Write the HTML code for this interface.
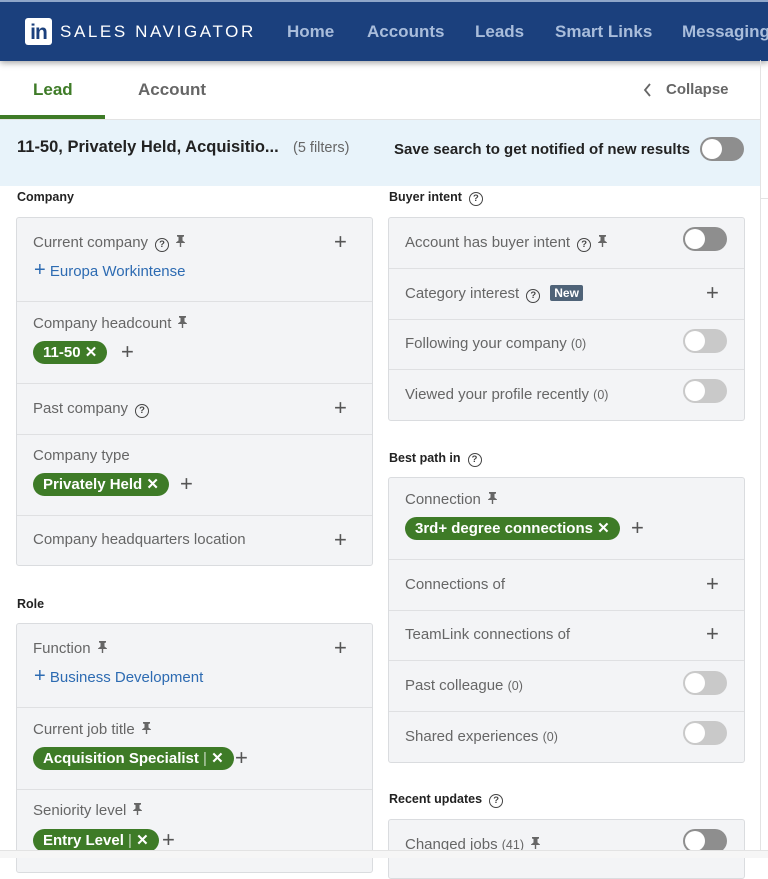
<!DOCTYPE html>
<html><head><meta charset="utf-8"><style>
*{margin:0;padding:0;box-sizing:border-box}
body{width:768px;height:858px;overflow:hidden;background:#fff;font-family:"Liberation Sans",Arial,sans-serif;position:relative}
.a{position:absolute;white-space:nowrap}
.hdr{left:0;top:0;width:768px;height:61px;background:#1b407d;border-top:2px solid #8fa6c9;box-shadow:0 2px 6px rgba(0,0,0,.35)}
.nav{top:22px;font-size:17px;font-weight:bold;color:#a9bddb}
.lbl{font-size:15px;color:#666;line-height:18px}
.sec{font-size:12.5px;font-weight:bold;color:#222;line-height:16px}
.card{background:#f3f4f6;border:1px solid #dadcdf;border-radius:3px}
.div{height:1px;background:#dfe0e2}
.plus{font-size:22px;color:#555;line-height:20px;font-weight:300}
.chip{background:#3e7b27;color:#fff;font-weight:bold;font-size:15px;height:23px;line-height:23px;border-radius:12px;padding:0 10px}
.tog{width:44px;height:24px;border-radius:12px;background:#c9c9c9}
.tog:after{content:"";position:absolute;left:2px;top:2px;width:20px;height:20px;border-radius:50%;background:#fff}
.blue{color:#2d6bb2;font-size:15px}
.q{display:inline-block;width:14px;height:14px;border:1.5px solid #444;border-radius:50%;font-size:9.5px;line-height:11px;text-align:center;font-weight:bold;color:#444;vertical-align:0;margin-left:7px}
.pin{display:inline-block;width:9px;height:12px;margin-left:7px;vertical-align:0}
.cnt{font-size:12.5px;color:#666}
</style></head><body>
<div class="a hdr"></div>
<div class="a" style="left:25px;top:18px;width:27px;height:27px;background:#fff;border-radius:3px;color:#1b407d;font-weight:bold;font-size:21px;line-height:29px;text-align:center;letter-spacing:-1px">in</div>
<div class="a" style="left:60px;top:22px;color:#fff;font-size:17px;letter-spacing:2.6px">SALES NAVIGATOR</div>
<div class="a nav" style="left:287px">Home</div>
<div class="a nav" style="left:367px">Accounts</div>
<div class="a nav" style="left:475px">Leads</div>
<div class="a nav" style="left:555px">Smart Links</div>
<div class="a nav" style="left:682px">Messaging</div>

<div class="a" style="left:33px;top:80px;font-size:17px;font-weight:bold;color:#3e7b27">Lead</div>
<div class="a" style="left:0;top:115px;width:105px;height:4px;background:#3e7b27"></div>
<div class="a" style="left:138px;top:80px;font-size:17px;font-weight:bold;color:#666">Account</div>
<svg class="a" style="left:643px;top:83px" width="8" height="14"><path d="M7 1L2 7l5 6" stroke="#666" stroke-width="1.8" fill="none"/></svg>
<div class="a" style="left:666px;top:81px;font-size:15px;font-weight:bold;color:#666">Collapse</div>
<div class="a" style="left:0;top:119px;width:760px;height:1px;background:#e3e3e3"></div>

<div class="a" style="left:0;top:120px;width:760px;height:66px;background:#e8f3fa"></div>
<div class="a" style="left:17px;top:138px;font-size:16.5px;font-weight:bold;color:#222">11-50, Privately Held, Acquisitio...</div>
<div class="a" style="left:293px;top:140px;font-size:14.5px;color:#666">(5 filters)</div>
<div class="a" style="left:394px;top:141px;font-size:15px;font-weight:bold;color:#222">Save search to get notified of new results</div>
<div class="a tog" style="left:700px;top:137px;background:#8e8e8e"></div>
<div class="a" style="left:760px;top:60px;width:1px;height:798px;background:#e3e3e3"></div>
<div class="a" style="left:761px;top:198px;width:7px;height:1px;background:#e3e3e3"></div>

<div class="a sec" style="left:17px;top:189px">Company</div>
<div class="a card" style="left:16px;top:217px;width:357px;height:349px"></div>
<div class="a div" style="left:17px;top:301px;width:355px"></div>
<div class="a div" style="left:17px;top:383px;width:355px"></div>
<div class="a div" style="left:17px;top:434px;width:355px"></div>
<div class="a div" style="left:17px;top:515px;width:355px"></div>

<svg width="0" height="0" style="position:absolute"><defs><symbol id="p" viewBox="0 0 9 12"><path d="M1 0h7v1.5L6.5 2v3.5L9 7.5V8H5.2v4H3.8V8H0v-.5L2.5 5.5V2L1 1.5z" fill="#666"/></symbol></defs></svg>

<div class="a lbl" style="left:33px;top:234px">Current company<span class="q">?</span><svg class="pin"><use href="#p"/></svg></div>
<div class="a plus" style="left:334px;top:232px">+</div>
<div class="a blue" style="left:34px;top:263px"><b style="font-size:20px;font-weight:normal;line-height:14px">+</b> Europa Workintense</div>

<div class="a lbl" style="left:33px;top:315px">Company headcount<svg class="pin"><use href="#p"/></svg></div>
<div class="a chip" style="left:33px;top:341px">11-50 ✕</div>
<div class="a plus" style="left:121px;top:342px">+</div>

<div class="a lbl" style="left:33px;top:400px">Past company<span class="q">?</span></div>
<div class="a plus" style="left:334px;top:398px">+</div>

<div class="a lbl" style="left:33px;top:447px">Company type</div>
<div class="a chip" style="left:33px;top:473px">Privately Held ✕</div>
<div class="a plus" style="left:180px;top:474px">+</div>

<div class="a lbl" style="left:33px;top:531px">Company headquarters location</div>
<div class="a plus" style="left:334px;top:530px">+</div>

<div class="a sec" style="left:17px;top:596px">Role</div>
<div class="a card" style="left:16px;top:623px;width:357px;height:250px"></div>
<div class="a div" style="left:17px;top:707px;width:355px"></div>
<div class="a div" style="left:17px;top:789px;width:355px"></div>
<div class="a lbl" style="left:33px;top:640px">Function<svg class="pin"><use href="#p"/></svg></div>
<div class="a plus" style="left:334px;top:638px">+</div>
<div class="a blue" style="left:34px;top:669px"><b style="font-size:20px;font-weight:normal;line-height:14px">+</b> Business Development</div>
<div class="a lbl" style="left:33px;top:721px">Current job title<svg class="pin"><use href="#p"/></svg></div>
<div class="a chip" style="left:33px;top:747px">Acquisition Specialist <span style="font-weight:normal;opacity:.7">|</span> ✕</div>
<div class="a plus" style="left:235px;top:748px">+</div>
<div class="a lbl" style="left:33px;top:802px">Seniority level<svg class="pin"><use href="#p"/></svg></div>
<div class="a chip" style="left:33px;top:829px">Entry Level <span style="font-weight:normal;opacity:.7">|</span> ✕</div>
<div class="a plus" style="left:162px;top:830px">+</div>

<div class="a sec" style="left:389px;top:189px">Buyer intent<span class="q">?</span></div>
<div class="a card" style="left:388px;top:217px;width:357px;height:204px"></div>
<div class="a div" style="left:389px;top:268px;width:355px"></div>
<div class="a div" style="left:389px;top:319px;width:355px"></div>
<div class="a div" style="left:389px;top:369px;width:355px"></div>
<div class="a lbl" style="left:405px;top:234px">Account has buyer intent<span class="q">?</span><svg class="pin"><use href="#p"/></svg></div>
<div class="a tog" style="left:683px;top:227px;background:#8e8e8e"></div>
<div class="a lbl" style="left:405px;top:285px">Category interest<span class="q">?</span><span style="display:inline-block;margin-left:10px;background:#4f6378;color:#fff;font-size:12px;font-weight:bold;padding:0 4px;line-height:16px;border-radius:2px;vertical-align:1px">New</span></div>
<div class="a plus" style="left:706px;top:283px">+</div>
<div class="a lbl" style="left:405px;top:335px">Following your company <span class="cnt">(0)</span></div>
<div class="a tog" style="left:683px;top:329px"></div>
<div class="a lbl" style="left:405px;top:386px">Viewed your profile recently <span class="cnt">(0)</span></div>
<div class="a tog" style="left:683px;top:379px"></div>

<div class="a sec" style="left:389px;top:450px">Best path in<span class="q">?</span></div>
<div class="a card" style="left:388px;top:477px;width:357px;height:286px"></div>
<div class="a div" style="left:389px;top:559px;width:355px"></div>
<div class="a div" style="left:389px;top:610px;width:355px"></div>
<div class="a div" style="left:389px;top:660px;width:355px"></div>
<div class="a div" style="left:389px;top:711px;width:355px"></div>
<div class="a lbl" style="left:405px;top:491px">Connection<svg class="pin"><use href="#p"/></svg></div>
<div class="a chip" style="left:405px;top:517px">3rd+ degree connections ✕</div>
<div class="a plus" style="left:631px;top:518px">+</div>
<div class="a lbl" style="left:405px;top:576px">Connections of</div>
<div class="a plus" style="left:706px;top:574px">+</div>
<div class="a lbl" style="left:405px;top:626px">TeamLink connections of</div>
<div class="a plus" style="left:706px;top:624px">+</div>
<div class="a lbl" style="left:405px;top:677px">Past colleague <span class="cnt">(0)</span></div>
<div class="a tog" style="left:683px;top:671px"></div>
<div class="a lbl" style="left:405px;top:728px">Shared experiences <span class="cnt">(0)</span></div>
<div class="a tog" style="left:683px;top:721px"></div>

<div class="a sec" style="left:389px;top:791px">Recent updates<span class="q">?</span></div>
<div class="a card" style="left:388px;top:819px;width:357px;height:60px"></div>
<div class="a lbl" style="left:405px;top:836px">Changed jobs <span class="cnt">(41)</span><svg class="pin"><use href="#p"/></svg></div>
<div class="a tog" style="left:683px;top:829px;background:#8e8e8e"></div>
<div class="a" style="left:0;top:850px;width:768px;height:8px;background:#f6f6f6;border-top:1px solid #e3e3e3"></div>
</body></html>
